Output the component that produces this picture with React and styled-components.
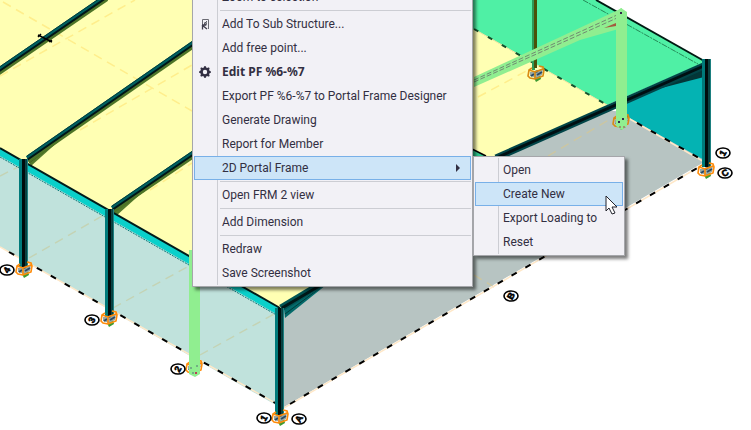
import React from "react";
import styled, { createGlobalStyle } from "styled-components";
import { BsGearFill } from "react-icons/bs";

const GlobalStyle = createGlobalStyle`
  body {
    margin: 0;
    background-color: #ffffff;
    overflow: hidden;
  }
`;
const Viewport = styled.main`
  position: relative;
  width: 100%;
  min-height: 100vh;
  overflow: hidden;
  font-family: Roboto, "Noto Sans", sans-serif;
`;
const Scene = styled.svg`
  display: block;
  width: 100%;
`;
const Menu = styled.div`
  position: absolute;
  top: ${(props) => props.$top}px;
  left: ${(props) => props.$left}px;
  width: ${(props) => props.$width}px;
  box-sizing: border-box;
  padding: 1px;
  border: 1px solid #a5a6aa;
  background-color: #f2f1f6;
  box-shadow: 3px 3px 3px rgba(0, 0, 0, 0.5);
  &::before {
    content: "";
    position: absolute;
    top: 1px;
    bottom: 1px;
    left: 24px;
    width: 1px;
    background-color: #cccdd3;
  }
`;
const Item = styled.button`
  position: relative;
  display: flex;
  align-items: center;
  width: 100%;
  height: 24px;
  box-sizing: border-box;
  padding: 0 10px 0 0;
  border: 1px solid ${(props) => (props.$active ? "#78b0e8" : "transparent")};
  background-color: ${(props) => (props.$active ? "#cde5f8" : "transparent")};
  color: #322f42;
  font-family: ${(props) => (props.$bold ? '"Noto Sans", sans-serif' : "inherit")};
  font-size: 12px;
  font-weight: ${(props) => (props.$bold ? 700 : 400)};
  line-height: 16px;
  text-align: left;
  white-space: nowrap;
  cursor: default;
`;
const IconSlot = styled.span`
  display: flex;
  flex: none;
  justify-content: center;
  width: 20px;
  margin-right: 7px;
`;
const Label = styled.span`
  flex: 1;
`;
const Separator = styled.hr`
  height: 1px;
  margin: 1px 0 1px 26px;
  border: none;
  background-color: #cccdd3;
`;
const Cursor = styled.svg`
  position: absolute;
  top: 195px;
  left: 605px;
`;

const SubStructureIcon = () => (
  <svg width="8" height="12" viewBox="0 0 8 12" fill="none">
    <path d="M1.5 7V1.5H7.5V11" stroke="#6a6a73" />
    <path d="M3 5.5L6 3.5M3 7L6 5M6 3.5L3 5.5L6 7" stroke="#55555f" />
    <path d="M1 7L6 11M1.5 7V11.5M1 7H5" stroke="#3f3d4c" strokeWidth="1.3" />
  </svg>
);
const ArrowIcon = () => (
  <svg width="4" height="8" viewBox="0 0 4 8">
    <path d="M0 0L4 4L0 8Z" fill="#322f42" />
  </svg>
);

const menuItems = [
  { label: "Zoom to selection" },
  { separator: true },
  { label: "Add To Sub Structure...", icon: <SubStructureIcon /> },
  { label: "Add free point..." },
  { label: "Edit PF %6-%7", icon: <BsGearFill size={12} />, bold: true },
  { label: "Export PF %6-%7 to Portal Frame Designer" },
  { label: "Generate Drawing" },
  { label: "Report for Member" },
  { label: "2D Portal Frame", active: true, submenu: true },
  { separator: true },
  { label: "Open FRM 2 view" },
  { separator: true },
  { label: "Add Dimension" },
  { separator: true },
  { label: "Redraw" },
  { label: "Save Screenshot" },
];
const submenuItems = [
  { label: "Open" },
  { label: "Create New", active: true },
  { label: "Export Loading to" },
  { label: "Reset" },
];

const ContextMenu = ({ items, top, left, width, name }) => (
  <Menu role="menu" aria-label={name} $top={top} $left={left} $width={width}>
    {items.map((item, i) =>
      item.separator ? (
        <Separator key={i} />
      ) : (
        <Item
          key={i}
          type="button"
          role="menuitem"
          aria-haspopup={item.submenu ? "menu" : undefined}
          $active={item.active}
          $bold={item.bold}
        >
          <IconSlot>{item.icon}</IconSlot>
          <Label>{item.label}</Label>
          {item.submenu && <ArrowIcon />}
        </Item>
      )
    )}
  </Menu>
);

// x, y is the middle of the base plate
const Footing = ({ x, y, dim }) => (
  <g transform={`translate(${x} ${y})`} fill="none">
    <path d="M-2 4L4 1L5 5L0 8Z" fill="#3f9a32" />
    <path d="M-6 -2L-1 -2L7 -5L6 1L0 4L-6 2Z" fill="#9aa9a2" />
    <path d="M-5 2L-2 0M1 1L6 -2M-1 -2L2 -3" stroke="#2b4a66" strokeWidth="2" />
    <path
      d="M-4 -6L-7 -4L-8 2L-6 4L-1 5L7 2L8 -4L7 -5L-1 -2L-7 -4M-1 -2V5M3 -8L7 -7L8 -4"
      stroke={dim ? "#d98a12" : "#ff8c0a"}
      strokeWidth="1.6"
    />
  </g>
);

const Column = ({ x, top, bottom }) => (
  <g>
    <rect x={x} y={top} width="9" height={bottom - top} fill="#1b7f7f" />
    <rect x={x} y={top} width="3" height={bottom - top} fill="#007a7a" />
    <rect x={x + 3} y={top} width="4" height={bottom - top} fill="#0a4444" />
    <rect x={x + 3} y={top} width="3" height={bottom - top} fill="#000c0c" />
    <rect x={x + 7} y={top} width="1" height={bottom - top} fill="#064040" />
  </g>
);

const Rafter = ({ d }) => (
  <g fill="none">
    <path d={d} stroke="#4d7428" strokeWidth="4" transform="translate(1 2)" />
    <path d={d} stroke="#006060" strokeWidth="4" transform="translate(0 -1)" />
    <path d={d} stroke="#001616" strokeWidth="2" transform="translate(0 1)" />
    <path d={d} stroke="#013e3e" transform="translate(0 -3)" />
  </g>
);

const GridMark = ({ x, y, angle, children }) => (
  <g transform={`translate(${x} ${y})`}>
    <ellipse rx="7" ry="5" fill="none" stroke="#000" strokeWidth="1.6" />
    <text
      transform={`rotate(${angle})`}
      y="3"
      textAnchor="middle"
      fontFamily="Liberation Sans, sans-serif"
      fontSize="9"
      fontWeight="700"
      stroke="#000"
      strokeWidth="0.6"
    >
      {children}
    </text>
  </g>
);

const BuildingModel = () => (
  <Scene viewBox="0 0 751 430" aria-label="Portal frame model">
    {/* roof and walls */}
    <path d="M0 0H480V30L607 105L480 165L281 308L0 149Z" fill="#ffffb3" />
    <path d="M470 0H596L706 62L607 105L470 27Z" fill="#4ff0a5" />
    <path d="M0 149L281 310V408L0 247Z" fill="#c0e2dc" />
    <path d="M283 306L322 285L474 170L606 110L623 112L706 161L284 407Z" fill="#b7c4c2" />
    <path d="M624 102L704 68V160L624 115Z" fill="#04b3b3" />
    <path d="M470 148L490 158H470Z" fill="#2fc78c" />
    <path d="M472 149L486 156" stroke="#000" strokeWidth="1.5" />

    {/* setting out lines */}
    <g fill="none" strokeDasharray="9 6">
      <path
        d="M3 2L192 111M0 76L135 0M80 130L192 65M150 190L192 163M478 97L532 68"
        stroke="#ffee8c"
        strokeWidth="1.5"
      />
      <path
        d="M0 176L20 166M29 258L104 215M113 308L189 266M200 355L276 313"
        stroke="#c4d3b4"
        strokeWidth="1.4"
      />
      <path d="M474 275L494 287M548 156L612 118" stroke="#cdc6a0" strokeWidth="1.4" />
    </g>
    <path d="M0 247L284 408L706 163L623 115" stroke="#ffe8c8" strokeWidth="1.5" fill="none" />
    <g fill="none" stroke="#000" strokeWidth="2" strokeDasharray="6 10">
      <path d="M9 252L284 408" />
      <path d="M290 404L706 163" />
      <path d="M623 115L706 162" />
    </g>
    <path d="M474 29L607 105" stroke="#ffe5a0" strokeWidth="1" />
    <path d="M474 29L607 105" stroke="#14502c" strokeWidth="2" strokeDasharray="5 11" />
    <path d="M596 0L706 62" stroke="#001a12" strokeWidth="2" />
    <path d="M583 0L698 64" stroke="#268a58" strokeDasharray="6 1 2 1" />

    {/* rear column */}
    <rect x="532" width="3" height="70" fill="#2d9b58" />
    <rect x="534" width="3" height="68" fill="#4a5208" />
    <Footing x={536} y={74} dim />

    {/* rafters and haunches */}
    <path d="M28 160L70 131L31 166Z" fill="#557b2c" />
    <path d="M113 209L154 182L116 216Z" fill="#557b2c" />
    <path d="M29 163L60 140M114 212L146 190" stroke="#3b5520" />
    <Rafter d="M-2 71L106 -3" />
    <Rafter d="M27 159L200 39" />
    <Rafter d="M112 209L200 149" />
    <path d="M284 309L326 285L285 318Z" fill="#046a6a" />
    <path d="M285 314L320 288" stroke="#003c3c" />
    <path d="M281 308L326 281" stroke="#005454" strokeWidth="7" />
    <path d="M282 308L326 282" stroke="#001818" strokeWidth="3" />
    <path d="M704 66V77L650 91Z" fill="#033638" />
    <path d="M496 158L706 65" stroke="#024548" strokeWidth="7" />
    <path d="M496 158L706 65" stroke="#000f12" strokeWidth="3" />

    {/* eaves beam */}
    <path d="M0 148L280 308V316L0 156Z" fill="#0ad0ca" />
    <path d="M0 157L280 317" stroke="#08797a" strokeDasharray="2 1" />
    <path d="M0 148L280 308" stroke="#001c1a" strokeWidth="2" />

    <Column x={19} top={159} bottom={267} />
    <Column x={105} top={209} bottom={317} />
    <Column x={275} top={308} bottom={415} />
    <Column x={702} top={59} bottom={167} />
    <Footing x={24} y={270} />
    <Footing x={109} y={319} />
    <Footing x={280} y={418} />
    <Footing x={706} y={171} />

    {/* selected frame */}
    <Footing x={194} y={368} />
    <path d="M189 250H200V374L195 377L189 374Z" fill="#90ee90" />
    <path d="M190 368H192M196 366H198M192 373H194" stroke="#54717a" />
    <path d="M195 373H197" stroke="#bb3e55" strokeWidth="2" />
    <Footing x={621} y={122} dim />
    <path d="M474 77L616 11L622 8V28L580 40L474 87Z" fill="#90ee90" />
    <path d="M474 82L617 18M474 80L617 15" stroke="#708a72" strokeDasharray="5 2" />
    <path d="M604 28L616 23V26Z" fill="#a35a3e" />
    <path d="M616 12L621 8L627 12V126L622 130L616 126Z" fill="#90ee90" />
    <path d="M620 13H622M618 122H620M622 119H624" stroke="#33284b" strokeWidth="2" />
    <path d="M619 127H621M623 127H625" stroke="#a33f50" />

    <path d="M38 35L52 42M38 37L41 34M49 42L52 40" stroke="#000" strokeWidth="1.5" />
    <GridMark x={7} y={270} angle={-60}>4</GridMark>
    <GridMark x={92} y={320} angle={-60}>3</GridMark>
    <GridMark x={178} y={369} angle={-60}>2</GridMark>
    <GridMark x={264} y={418} angle={-60}>1</GridMark>
    <GridMark x={299} y={419} angle={-60}>A</GridMark>
    <GridMark x={511} y={296} angle={-60}>B</GridMark>
    <GridMark x={725} y={173} angle={-30}>C</GridMark>
    <GridMark x={723} y={153} angle={-60}>1</GridMark>
  </Scene>
);

const App = () => {
  return (
    <>
      <GlobalStyle />
      <Viewport>
        <BuildingModel />
        <ContextMenu name="Member" items={menuItems} top={-17} left={192} width={281} />
        <ContextMenu name="2D Portal Frame" items={submenuItems} top={156} left={473} width={152} />
        <Cursor width="13" height="20" viewBox="0 0 13 20" aria-hidden="true">
          <path
            d="M1 1V16L4 13L7 19L10 18L7 12H12Z"
            fill="#fff"
            stroke="#22232c"
          />
        </Cursor>
      </Viewport>
    </>
  );
};

export default App;
